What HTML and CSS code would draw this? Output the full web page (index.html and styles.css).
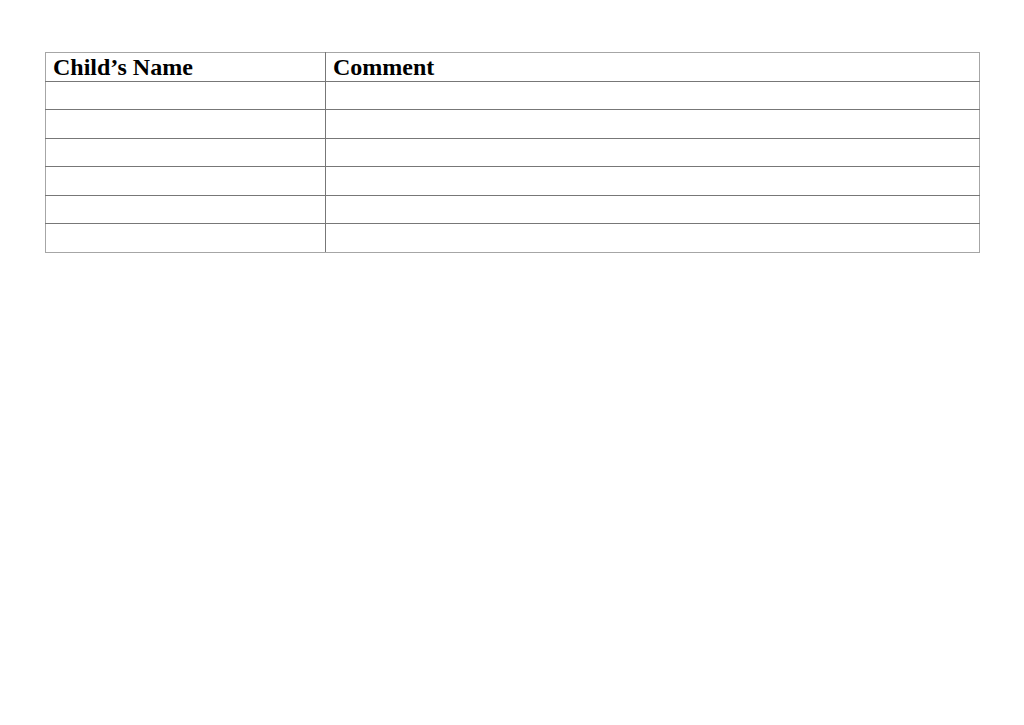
FILE: index.html
```html
<!DOCTYPE html>
<html lang="en">
<head>
    <meta charset="UTF-8">
    <meta name="viewport" content="width=device-width, initial-scale=1.0">
    <title>Comments</title>
    <link rel="stylesheet" href="styles.css">
</head>
<body>
    <div class="page">
        <table class="sheet">
            <colgroup>
                <col class="col-name">
                <col class="col-comment">
            </colgroup>
            <tr class="head">
                <th>Child’s Name</th>
                <th>Comment</th>
            </tr>
            <tr><td></td><td></td></tr>
            <tr><td></td><td></td></tr>
            <tr><td></td><td></td></tr>
            <tr><td></td><td></td></tr>
            <tr><td></td><td></td></tr>
            <tr><td></td><td></td></tr>
        </table>
    </div>
</body>
</html>
```

FILE: styles.css
```css
body {
    margin: 0;
    background-color: #fff;
    font-family: "Liberation Serif", "Times New Roman", serif;
    color: #000;
}
.page {
    padding: 52px 0 0 45px;
}
.sheet {
    width: 935px;
    border-collapse: collapse;
    border: 1px solid #a6a6a6; /* lighter outer edge */
    table-layout: fixed;
}
.col-name {
    width: 280px;
}
.sheet tr {
    height: 28.57px;
}
.sheet th,
.sheet td {
    border: 1px solid #777;
    padding: 0 7px;
    text-align: left;
    vertical-align: bottom;
}
.sheet th {
    font-size: 24px;
    font-weight: bold;
    line-height: 27px;
}
.sheet tr:first-child th {
    border-top-color: #a6a6a6;
}
.sheet tr:last-child td {
    border-bottom-color: #a6a6a6;
}
.sheet th:first-child,
.sheet td:first-child {
    border-left-color: #a6a6a6;
}
.sheet th:last-child,
.sheet td:last-child {
    border-right-color: #a6a6a6;
}
```
